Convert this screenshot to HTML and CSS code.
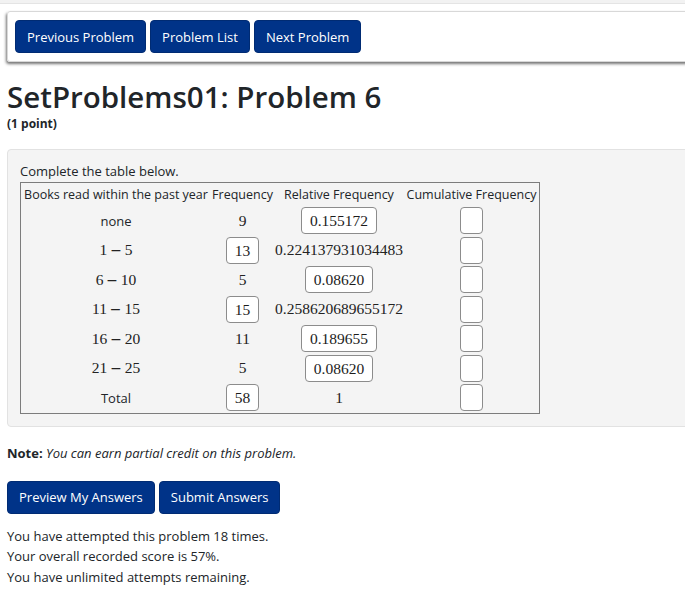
FILE: index.html
```html
<!DOCTYPE html>
<html lang="en">
<head>
<meta charset="utf-8">
<title>SetProblems01: Problem 6</title>
<link rel="stylesheet" href="styles.css">
</head>
<body>
<div class="topbar"></div>
<div class="page">
  <div class="navbox">
    <a class="btn">Previous Problem</a>
    <a class="btn">Problem List</a>
    <a class="btn">Next Problem</a>
  </div>
  <h1 class="title">SetProblems01: Problem 6</h1>
  <div class="points">(1 point)</div>
  <div class="problem">
    <p class="intro">Complete the table below.</p>
    <table class="freq">
      <colgroup>
        <col class="c1"><col class="c2"><col class="c3"><col class="c4">
      </colgroup>
      <tr class="head">
        <td>Books read within the past year</td>
        <td>Frequency</td>
        <td>Relative Frequency</td>
        <td>Cumulative Frequency</td>
      </tr>
      <tr>
        <td class="txt">none</td>
        <td class="m">9</td>
        <td><span class="ans">0.155172</span></td>
        <td><span class="ans empty"></span></td>
      </tr>
      <tr>
        <td class="m">1<span class="op">−</span>5</td>
        <td><span class="ans">13</span></td>
        <td class="m">0.224137931034483</td>
        <td><span class="ans empty"></span></td>
      </tr>
      <tr>
        <td class="m">6<span class="op">−</span>10</td>
        <td class="m">5</td>
        <td><span class="ans">0.08620</span></td>
        <td><span class="ans empty"></span></td>
      </tr>
      <tr>
        <td class="m">11<span class="op">−</span>15</td>
        <td><span class="ans">15</span></td>
        <td class="m">0.258620689655172</td>
        <td><span class="ans empty"></span></td>
      </tr>
      <tr>
        <td class="m">16<span class="op">−</span>20</td>
        <td class="m">11</td>
        <td><span class="ans">0.189655</span></td>
        <td><span class="ans empty"></span></td>
      </tr>
      <tr>
        <td class="m">21<span class="op">−</span>25</td>
        <td class="m">5</td>
        <td><span class="ans">0.08620</span></td>
        <td><span class="ans empty"></span></td>
      </tr>
      <tr>
        <td class="txt">Total</td>
        <td><span class="ans">58</span></td>
        <td class="m">1</td>
        <td><span class="ans empty"></span></td>
      </tr>
    </table>
  </div>
  <p class="note"><b>Note:</b> <i>You can earn partial credit on this problem.</i></p>
  <div class="actions">
    <a class="btn">Preview My Answers</a>
    <a class="btn">Submit Answers</a>
  </div>
  <div class="attempts">
    <div>You have attempted this problem 18 times.</div>
    <div>Your overall recorded score is 57%.</div>
    <div>You have unlimited attempts remaining.</div>
  </div>
</div>
</body>
</html>
```

FILE: styles.css
```css
html, body {
  margin: 0;
  padding: 0;
  overflow: hidden;
  background: #fff;
}
body {
  font-family: "Open Sans", "Noto Sans", sans-serif;
  font-size: 13px;
  color: #212529;
}
.topbar {
  height: 3px;
  background: #f2f2f2;
  border-bottom: 1px solid #e4e4e4;
}
.page {
  padding: 0 0 0 7px;
}
.navbox {
  margin-top: 7px;
  width: 720px;
  height: 51px;
  box-sizing: border-box;
  border: 1px solid #d8d8d8;
  border-radius: 3px;
  box-shadow: -1px 2px 3px rgba(0, 0, 0, 0.55);
  padding: 8px 7px;
  display: flex;
  gap: 4px;
}
.btn {
  display: inline-flex;
  align-items: center;
  height: 33px;
  box-sizing: border-box;
  padding: 0 11px;
  background: #003388;
  border: 1px solid #002b73;
  border-radius: 4px;
  color: #fff;
  font-size: 13px;
  text-decoration: none;
}
.title {
  margin: 18px 0 0;
  font-size: 29.5px;
  font-weight: 600;
  line-height: 34px;
  color: #212529;
}
.points {
  margin-top: 2px;
  font-weight: 700;
  font-size: 12px;
  line-height: 16px;
}
.problem {
  margin-top: 17px;
  width: 720px;
  box-sizing: border-box;
  background: #f4f4f4;
  border: 1px solid #e2e2e2;
  border-radius: 4px;
  padding: 11px 12px 12px;
}
.intro {
  margin: 0;
  line-height: 21px;
  font-size: 13px;
}
.freq {
  border: 1px solid #7c7c7c;
  border-spacing: 0;
  table-layout: fixed;
  width: 520px;
  white-space: nowrap;
}
.c1 { width: 190px; }
.c2 { width: 63px; }
.c3 { width: 130px; }
.c4 { width: 135px; }
.freq td {
  padding: 0;
  text-align: center;
  height: 29.5px;
  vertical-align: middle;
}
.freq .head td {
  height: 23px;
  font-size: 12.5px;
}
.txt {
  font-size: 13px;
}
.m {
  font-family: "Liberation Serif", "Times New Roman", serif;
  font-size: 15.5px;
  color: #222;
}
.op {
  font-family: "DejaVu Serif", serif;
  font-size: 14px;
  margin: 0 0.2em;
}
.ans {
  display: inline-block;
  vertical-align: middle;
  box-sizing: border-box;
  height: 27px;
  min-width: 23px;
  padding: 0 8px;
  line-height: 25px;
  background: #fff;
  border: 1px solid #8c8c8c;
  border-radius: 4px;
  font-family: "Liberation Serif", "Times New Roman", serif;
  font-size: 15.5px;
  color: #1c1c1c;
}
.note {
  margin: 16px 0 0;
  line-height: 20px;
}
.actions {
  margin-top: 18px;
  display: flex;
  gap: 4px;
}
.attempts {
  margin-top: 12px;
  line-height: 20.5px;
}
```
